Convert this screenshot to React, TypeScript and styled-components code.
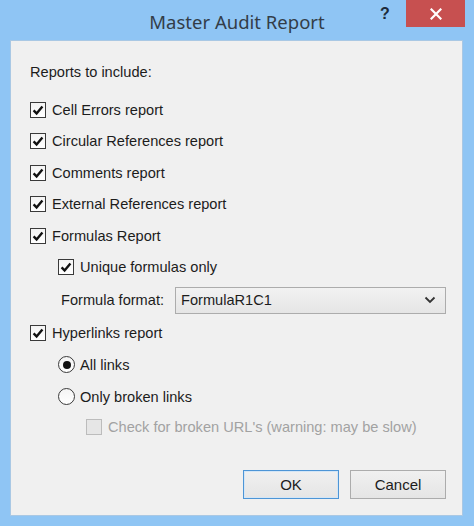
import React from "react";
import styled, { createGlobalStyle } from "styled-components";

const GlobalStyle = createGlobalStyle`
  html, body {
    margin: 0;
    padding: 0;
    background: #8fc5f4;
  }
  * {
    box-sizing: border-box;
  }
`;

const reports = [
  "Cell Errors report",
  "Circular References report",
  "Comments report",
  "External References report",
  "Formulas Report",
];

function App() {
  return (
    <>
      <GlobalStyle />
      <Window>
        <TitleBar>
          <span />
          <Title>Master Audit Report</Title>
          <Controls>
            <HelpButton>?</HelpButton>
            <CloseButton>
              <svg width="12" height="12" viewBox="0 0 12 12">
                <path d="M1.5 1.5 L10.5 10.5 M10.5 1.5 L1.5 10.5" stroke="#fff" strokeWidth="2.2" strokeLinecap="square" />
              </svg>
            </CloseButton>
          </Controls>
        </TitleBar>

        <Client>
          <Heading>Reports to include:</Heading>

          <List>
            {reports.map((r) => (
              <Row key={r} $h={31.5}>
                <Check checked />
                <Label>{r}</Label>
              </Row>
            ))}
            <Row $h={31.5} $indent={28}>
              <Check checked />
              <Label>Unique formulas only</Label>
            </Row>
            <Row $h={34} $indent={31}>
              <Label $gap={0}>Formula format:</Label>
              <Select>
                <span>FormulaR1C1</span>
                <svg width="12" height="8" viewBox="0 0 12 8">
                  <path d="M1.5 1.5 L6 6 L10.5 1.5" fill="none" stroke="#333" strokeWidth="1.8" />
                </svg>
              </Select>
            </Row>
            <Row $h={31.5}>
              <Check checked />
              <Label>Hyperlinks report</Label>
            </Row>
            <Row $h={32} $indent={28}>
              <Radio $on />
              <Label $gap={5}>All links</Label>
            </Row>
            <Row $h={32} $indent={28}>
              <Radio />
              <Label $gap={5}>Only broken links</Label>
            </Row>
            <Row $h={28} $indent={56}>
              <Check disabled />
              <Label $disabled>Check for broken URL's (warning: may be slow)</Label>
            </Row>
          </List>

          <Buttons>
            <Button $default>OK</Button>
            <Button>Cancel</Button>
          </Buttons>
        </Client>
      </Window>
    </>
  );
}

function Check({ checked, disabled }: { checked?: boolean; disabled?: boolean }) {
  return (
    <Box $disabled={disabled}>
      {checked && (
        <svg width="14" height="14" viewBox="0 0 14 14">
          <path d="M2.6 7.4 L5.6 10.4 L11.4 3.4" fill="none" stroke="#111" strokeWidth="2.4" />
        </svg>
      )}
    </Box>
  );
}

const Window = styled.div`
  width: 474px;
  height: 526px;
  display: flex;
  flex-direction: column;
  background: #8fc5f4;
  font-family: "Liberation Sans", Arial, sans-serif;
  color: #1c1c1c;
`;

const TitleBar = styled.div`
  height: 40px;
  display: grid;
  grid-template-columns: 1fr auto 1fr;
`;

const Title = styled.div`
  padding-top: 9px;
  font-family: "Noto Sans", "Liberation Sans", sans-serif;
  font-size: 18.5px;
  color: #333d48;
  white-space: nowrap;
`;

const Controls = styled.div`
  display: flex;
  justify-content: flex-end;
  align-items: flex-start;
  padding-right: 9px;
`;

const HelpButton = styled.div`
  width: 36px;
  height: 27px;
  display: flex;
  align-items: center;
  justify-content: center;
  padding-right: 6px;
  font-family: "Liberation Sans", sans-serif;
  font-weight: bold;
  font-size: 16px;
  color: #1d2b3a;
`;

const CloseButton = styled.div`
  width: 59px;
  height: 27px;
  background: #c75050;
  display: flex;
  align-items: center;
  justify-content: center;
`;

const Client = styled.div`
  flex: 1;
  margin: 0 11px 10px 10px;
  border: 1px solid #a9c8e4;
  background: #f0f0f0;
  padding: 21px 16px 16px 19px;
  display: flex;
  flex-direction: column;
`;

const Heading = styled.div`
  height: 20px;
  line-height: 20px;
  font-size: 14.6px;
  margin-bottom: 12px;
`;

const List = styled.div`
  display: flex;
  flex-direction: column;
`;

const Row = styled.div<{ $h: number; $indent?: number }>`
  height: ${(p) => p.$h}px;
  display: flex;
  align-items: center;
  padding-left: ${(p) => p.$indent || 0}px;
`;

const Box = styled.span<{ $disabled?: boolean }>`
  width: 16px;
  height: 16px;
  flex: none;
  display: flex;
  align-items: center;
  justify-content: center;
  border: 1px solid ${(p) => (p.$disabled ? "#bcbcbc" : "#3a3a3a")};
  background: ${(p) => (p.$disabled ? "#e6e6e6" : "linear-gradient(#f4f4f4, #ffffff)")};
`;

const Radio = styled.span<{ $on?: boolean }>`
  width: 17px;
  height: 17px;
  flex: none;
  border-radius: 50%;
  border: 1px solid #3a3a3a;
  background: linear-gradient(#f4f4f4, #ffffff);
  display: flex;
  align-items: center;
  justify-content: center;
  &::after {
    content: "";
    width: 8px;
    height: 8px;
    border-radius: 50%;
    background: #111;
    display: ${(p) => (p.$on ? "block" : "none")};
  }
`;

const Label = styled.span<{ $disabled?: boolean; $gap?: number }>`
  margin-left: ${(p) => (p.$gap === undefined ? 6 : p.$gap)}px;
  font-size: 14.6px;
  white-space: nowrap;
  color: ${(p) => (p.$disabled ? "#a2a2a2" : "#1c1c1c")};
`;

const Select = styled.div`
  margin-left: auto;
  width: 271px;
  height: 27px;
  border: 1px solid #acacac;
  background: linear-gradient(#f2f2f2, #e5e5e5);
  display: flex;
  align-items: center;
  justify-content: space-between;
  padding: 0 9px 0 5px;
  font-size: 14.6px;
`;

const Buttons = styled.div`
  margin-top: auto;
  display: flex;
  justify-content: flex-end;
  gap: 11px;
`;

const Button = styled.div<{ $default?: boolean }>`
  width: 96px;
  height: 29px;
  display: flex;
  align-items: center;
  justify-content: center;
  font-size: 15px;
  background: linear-gradient(#f0f0f0, #e5e5e5);
  border: 1px solid ${(p) => (p.$default ? "#4d95d6" : "#acacac")};
  box-shadow: ${(p) => (p.$default ? "inset 0 0 0 1px #d4e6f6" : "none")};
`;

export default App;
